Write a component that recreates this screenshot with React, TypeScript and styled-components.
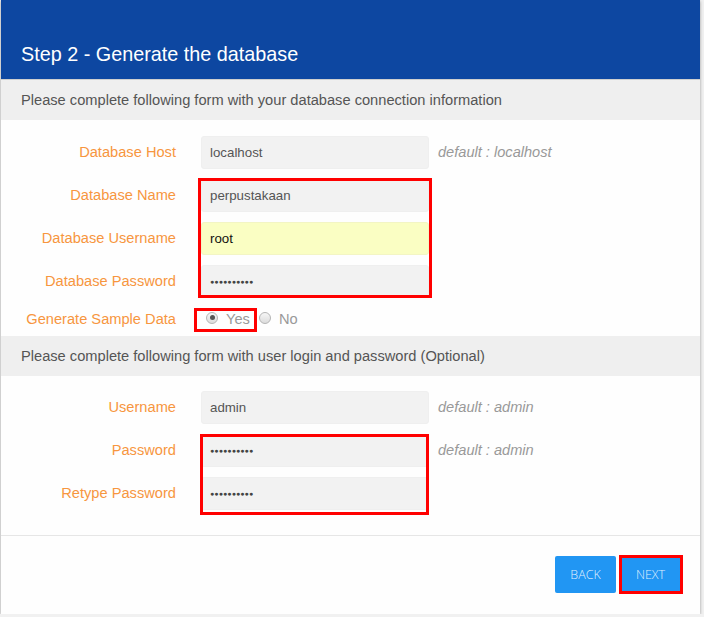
import React from 'react'
import styled, { createGlobalStyle } from 'styled-components'

const GlobalStyle = createGlobalStyle`
  html, body {
    margin: 0;
    padding: 0;
    background: #f1f1f1;
    font-family: 'Liberation Sans', Arial, sans-serif;
  }
`

const Card = styled.div`
  position: relative;
  margin-left: 1px;
  width: 699px;
  background: #fefefe;
  box-shadow: 0 1px 3px rgba(0, 0, 0, 0.35);
`

const Header = styled.div`
  height: 80px;
  box-sizing: border-box;
  background: #0d47a1;
  border-bottom: 1px solid #cfcfcf;
  padding: 42px 0 0 20px;
  color: #fff;
  font-size: 19.8px;
  line-height: 24px;
`

const SectionBar = styled.div`
  height: 40px;
  display: flex;
  align-items: center;
  padding-left: 20px;
  background: #efefef;
  color: #555;
  font-size: 14.65px;
`

const Fields = styled.div<{ top: number; bottom: number }>`
  padding-top: ${(p) => p.top}px;
  padding-bottom: ${(p) => p.bottom}px;
`

const Row = styled.div`
  display: flex;
  align-items: center;
  height: 33px;
  margin-bottom: 10px;
  &:last-child {
    margin-bottom: 0;
  }
`

const Label = styled.label`
  width: 175px;
  text-align: right;
  color: #f7963f;
  font-size: 14.65px;
  margin-right: 25px;
  padding-bottom: 2px;
`

const Input = styled.div<{ highlight?: boolean; dark?: boolean }>`
  width: 228px;
  height: 33px;
  box-sizing: border-box;
  display: flex;
  align-items: center;
  padding-left: 8px;
  border-radius: 3px;
  border: 1px solid ${(p) => (p.highlight ? '#f3f5c4' : '#efefef')};
  background: ${(p) => (p.highlight ? '#fafec3' : '#f2f2f2')};
  color: ${(p) => (p.dark ? '#111' : '#555')};
  font-size: 13.3px;
`

const Dots = styled.span`
  font-size: 7px;
  letter-spacing: 0.1px;
  color: #444;
`

const Hint = styled.span`
  margin-left: 9px;
  padding-bottom: 2px;
  color: #999;
  font-style: italic;
  font-size: 14.6px;
`

const SampleRow = styled.div`
  display: flex;
  align-items: center;
  height: 32px;
  padding-top: 6px;
`

const RadioGroup = styled.div`
  display: flex;
  align-items: center;
  margin-left: 5px;
  padding-bottom: 2px;
  color: #999;
  font-size: 14.65px;
`

const Radio = styled.span<{ checked?: boolean }>`
  width: 12px;
  height: 12px;
  box-sizing: border-box;
  border-radius: 50%;
  border: 1px solid #b5b5b5;
  background: linear-gradient(#f6f6f6, #dcdcdc);
  display: flex;
  align-items: center;
  justify-content: center;
  margin-right: 8px;
  margin-top: -3px;
  &::after {
    content: '';
    display: ${(p) => (p.checked ? 'block' : 'none')};
    width: 5px;
    height: 5px;
    border-radius: 50%;
    background: #555;
  }
`

const Option = styled.span`
  margin-right: 9px;
`

const Footer = styled.div`
  border-top: 1px solid #e6e6e6;
  display: flex;
  justify-content: flex-end;
  gap: 4px;
  padding: 20px 19px 21px 0;
`

const Button = styled.button`
  width: 61px;
  height: 37px;
  border: none;
  border-radius: 2px;
  background: #2196f3;
  color: rgba(255, 255, 255, 0.88);
  font-family: 'Open Sans', sans-serif;
  font-weight: 300;
  font-size: 12.5px;
  padding: 0;
`

const Mark = styled.div<{ x: number; y: number; w: number; h: number }>`
  position: absolute;
  left: ${(p) => p.x - 1}px;
  top: ${(p) => p.y}px;
  width: ${(p) => p.w}px;
  height: ${(p) => p.h}px;
  box-sizing: border-box;
  border: 3px solid #ff0000;
  pointer-events: none;
`

export default function App() {
  return (
    <>
      <GlobalStyle />
      <Card>
        <Header>Step 2 - Generate the database</Header>
        <SectionBar>Please complete following form with your database connection information</SectionBar>
        <Fields top={16} bottom={0}>
          <Row>
            <Label>Database Host</Label>
            <Input>localhost</Input>
            <Hint>default : localhost</Hint>
          </Row>
          <Row>
            <Label>Database Name</Label>
            <Input>perpustakaan</Input>
          </Row>
          <Row>
            <Label>Database Username</Label>
            <Input highlight dark>root</Input>
          </Row>
          <Row>
            <Label>Database Password</Label>
            <Input><Dots>●●●●●●●●●●</Dots></Input>
          </Row>
        </Fields>
        <SampleRow>
          <Label>Generate Sample Data</Label>
          <RadioGroup>
            <Radio checked />
            <Option>Yes</Option>
            <Radio />
            <Option>No</Option>
          </RadioGroup>
        </SampleRow>
        <SectionBar>Please complete following form with user login and password (Optional)</SectionBar>
        <Fields top={15} bottom={25}>
          <Row>
            <Label>Username</Label>
            <Input>admin</Input>
            <Hint>default : admin</Hint>
          </Row>
          <Row>
            <Label>Password</Label>
            <Input><Dots>●●●●●●●●●●</Dots></Input>
            <Hint>default : admin</Hint>
          </Row>
          <Row>
            <Label>Retype Password</Label>
            <Input><Dots>●●●●●●●●●●</Dots></Input>
          </Row>
        </Fields>
        <Footer>
          <Button>BACK</Button>
          <Button>NEXT</Button>
        </Footer>
        <Mark x={198} y={178} w={234} h={120} />
        <Mark x={194} y={308} w={63} h={24} />
        <Mark x={200} y={434} w={229} h={81} />
        <Mark x={619} y={555} w={64} h={39} />
      </Card>
    </>
  )
}
